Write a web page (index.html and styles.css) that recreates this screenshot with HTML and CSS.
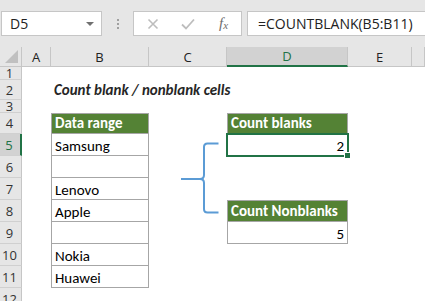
FILE: index.html
```html
<!DOCTYPE html>
<html lang="en">
<head>
    <meta charset="UTF-8">
    <meta name="viewport" content="width=device-width, initial-scale=1.0">
    <title>Count blank / nonblank cells</title>
    <link rel="stylesheet" href="styles.css">
</head>
<body>
    <!-- Name box + formula bar -->
    <div class="toolbar">
        <div class="namebox">
            <span>D5</span>
            <span class="caret"></span>
        </div>
        <div class="grip"><i></i><i></i><i></i></div>
        <div class="fxbox">
            <svg class="ico" width="12" height="12" viewBox="0 0 12 12">
                <path d="M1.5 1.5 L10.5 10.5 M10.5 1.5 L1.5 10.5" stroke="#bdbdbd" stroke-width="1.6" fill="none"/>
            </svg>
            <svg class="ico" width="14" height="12" viewBox="0 0 14 12">
                <path d="M1 6.5 L5 10.5 L13 1.5" stroke="#bdbdbd" stroke-width="1.8" fill="none"/>
            </svg>
            <span class="fx">f<sub>x</sub></span>
        </div>
        <div class="formula">=COUNTBLANK(B5:B11)</div>
    </div>

    <!-- Sheet -->
    <div class="sheet">
        <div class="row hdr">
            <div class="corner"><span></span></div>
            <div class="colh">A</div>
            <div class="colh">B</div>
            <div class="colh">C</div>
            <div class="colh active">D</div>
            <div class="colh">E</div>
            <div class="colh"></div>
        </div>

        <div class="row h14"><div class="rh">1</div></div>

        <div class="row h20">
            <div class="rh">2</div>
            <div class="title">Count blank / nonblank cells</div>
        </div>

        <div class="row h13"><div class="rh">3</div></div>

        <div class="row h21">
            <div class="rh">4</div>
            <div class="cell colB head top">Data range</div>
            <div class="cell colD head top">Count blanks</div>
        </div>

        <div class="row">
            <div class="rh active">5</div>
            <div class="cell colB">Samsung</div>
            <div class="cell colD num selected">2<span class="handle"></span></div>
        </div>

        <div class="row">
            <div class="rh">6</div>
            <div class="cell colB"></div>
        </div>

        <div class="row">
            <div class="rh">7</div>
            <div class="cell colB">Lenovo</div>
        </div>

        <div class="row">
            <div class="rh">8</div>
            <div class="cell colB">Apple</div>
            <div class="cell colD head top">Count Nonblanks</div>
        </div>

        <div class="row">
            <div class="rh">9</div>
            <div class="cell colB"></div>
            <div class="cell colD num">5</div>
        </div>

        <div class="row">
            <div class="rh">10</div>
            <div class="cell colB">Nokia</div>
        </div>

        <div class="row">
            <div class="rh">11</div>
            <div class="cell colB">Huawei</div>
        </div>

        <div class="row">
            <div class="rh">12</div>
        </div>

        <!-- brace drawn on top of the cells -->
        <svg class="brace" width="60" height="90" viewBox="170 130 60 90">
            <path d="M218.5 143.5 H207.5 Q204 143.5 204 147 V175 Q204 179 200 179 H181 M200 179 Q204 179 204 183 V209 Q204 212.5 207.5 212.5 H218.5"
                  stroke="#5b9bd5" stroke-width="2" fill="none"/>
        </svg>
    </div>
</body>
</html>
```

FILE: styles.css
```css
body {
    margin: 0;
    width: 425px;
    height: 301px;
    overflow: hidden;
    background: #fff;
    font-family: "Open Sans", "Noto Sans", Arial, sans-serif;
    color: #000;
}

/* Formula bar */
.toolbar {
    height: 47px;
    box-sizing: border-box;
    padding: 11px 0 0 1px;
    background: #e6e6e6;
    display: flex;
    align-items: flex-start;
}

.namebox {
    width: 101px;
    height: 25px;
    box-sizing: border-box;
    background: #fff;
    border: 1px solid #c6c6c6;
    display: flex;
    align-items: center;
    justify-content: space-between;
    padding: 0 7px 0 8px;
    font-size: 14px;
    color: #222;
}

.caret {
    width: 0;
    height: 0;
    border-left: 4px solid transparent;
    border-right: 4px solid transparent;
    border-top: 4px solid #707070;
}

.grip {
    width: 31px;
    height: 25px;
    display: flex;
    flex-direction: column;
    align-items: center;
    justify-content: center;
    gap: 2px;
}

.grip i {
    width: 2px;
    height: 2px;
    background: #a0a0a0;
}

.fxbox {
    width: 109px;
    height: 25px;
    box-sizing: border-box;
    background: #fff;
    border: 1px solid #c6c6c6;
    display: flex;
    align-items: center;
    padding-left: 13px;
    gap: 22px;
}

.fx {
    font-family: "Liberation Serif", serif;
    font-style: italic;
    font-size: 15px;
    color: #6d6d6d;
    margin-left: 2px;
}

.fx sub {
    font-size: 11px;
    vertical-align: -1px;
}

.formula {
    flex: 1;
    height: 25px;
    margin-left: 5px;
    box-sizing: border-box;
    background: #fff;
    border: 1px solid #c6c6c6;
    border-right: none;
    padding-left: 10px;
    display: flex;
    align-items: center;
    font-size: 14px;
    color: #222;
}

/* Sheet grid */
.sheet {
    position: relative;
}

.row {
    display: grid;
    grid-template-columns: 22px 29px 98px 78px 121px 64px 13px;
    height: 22px;
}

.row.h13 { height: 13px; }
.row.h14 { height: 14px; }
.row.h20 { height: 20px; }
.row.h21 { height: 21px; }
.row.hdr { height: 19px; }

.corner,
.colh {
    background: #e6e6e6;
    border-right: 1px solid #c6c6c6;
    border-bottom: 1px solid #c6c6c6;
    box-sizing: border-box;
}

.corner {
    position: relative;
}

.corner span {
    position: absolute;
    right: 3px;
    bottom: 3px;
    width: 0;
    height: 0;
    border-left: 13px solid transparent;
    border-bottom: 13px solid #c0c0c0;
}

.colh {
    display: flex;
    align-items: center;
    justify-content: center;
    font-size: 13px;
    color: #222;
}

.colh.active {
    background: #d2d2d2;
    color: #217346;
    border-bottom: 2px solid #217346;
}

.rh {
    grid-column: 1;
    background: #e6e6e6;
    border-right: 1px solid #c6c6c6;
    border-bottom: 1px solid #d0d0d0;
    box-sizing: border-box;
    display: flex;
    align-items: center;
    justify-content: center;
    padding-right: 2px;
    font-size: 13px;
    color: #333;
    overflow: hidden;
}

.rh.active {
    background: #d2d2d2;
    color: #217346;
    border-right: 2px solid #217346;
}

.title {
    grid-column: 3 / 8;
    display: flex;
    align-items: flex-end;
    padding: 0 0 1px 3px;
    line-height: 18px;
    white-space: nowrap;
    font-family: "Carlito", "Lato", sans-serif;
    font-size: 15px;
    font-weight: bold;
    font-style: italic;
    color: #262626;
}

/* Table cells */
.cell {
    box-sizing: border-box;
    border: 1px solid #a6a6a6;
    border-top: none;
    display: flex;
    align-items: flex-end;
    padding: 0 3px 0 3px;
    line-height: 18px;
    white-space: nowrap;
    font-family: "Carlito", "Lato", sans-serif;
    font-size: 15px;
}

.cell.top {
    border-top: 1px solid #a6a6a6;
}

.colB { grid-column: 3; }
.colD { grid-column: 5; }

.cell.head {
    background: #548235;
    color: #fff;
    font-weight: bold;
    padding-bottom: 1px;
}

.cell.num {
    justify-content: flex-end;
}

.cell.selected {
    position: relative;
    outline: 2px solid #217346;
    outline-offset: -1px;
}

.handle {
    position: absolute;
    right: -4px;
    bottom: -4px;
    width: 5px;
    height: 5px;
    background: #217346;
    border: 1px solid #fff;
}

.brace {
    position: absolute;
    left: 170px;
    top: 83px;
}
```
